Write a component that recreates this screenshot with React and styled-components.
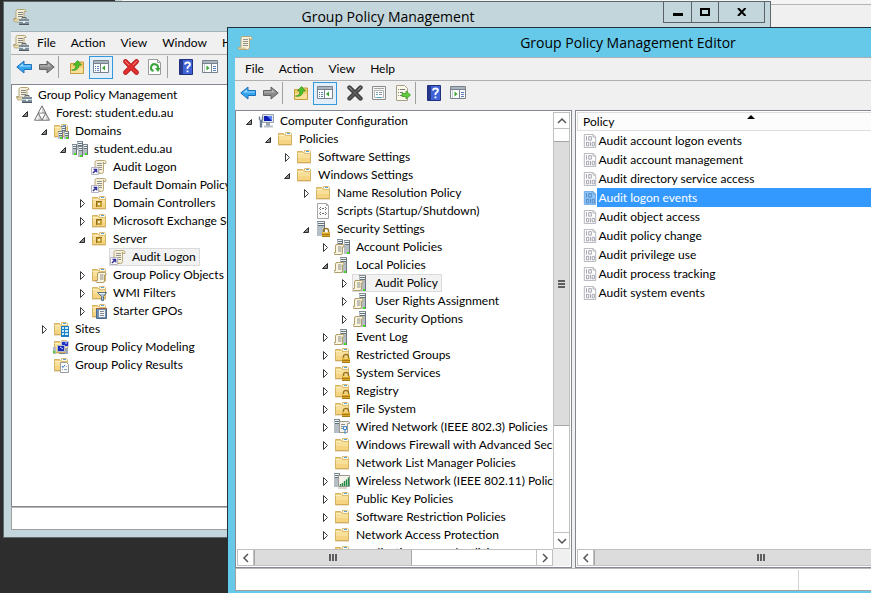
import React from 'react';
import styled, { createGlobalStyle, css } from 'styled-components';

const Global = createGlobalStyle`
  * { box-sizing: border-box; }
  body { margin: 0; }
  button { font: inherit; color: inherit; background: none; border: 0; padding: 0; margin: 0; }
  ul { list-style: none; margin: 0; padding: 0; }
`;

/* ---------- windows ---------- */

const Desktop = styled.div`
  position: relative;
  min-height: 100vh;
  overflow: hidden;
  background: #2d2d2d;
  color: #000;
  font-family: Lato, 'Open Sans', sans-serif;
  font-size: 12px;
  line-height: 18px;
  white-space: nowrap;
`;

const BackWindow = styled.div`
  position: absolute;
  top: 0;
  left: 115px;
  right: 0;
  height: 60px;
  border-left: 7px solid #c3d6db;
  background: #f0f0f0;
`;

const BackBar = styled.div`
  height: 5px;
  background: #f4f4f4;
  border-bottom: 1px solid #b4b4b4;
`;

const Window = styled.section`
  position: absolute;
  display: flex;
  flex-direction: column;
  background: ${(p) => p.$frame};
  border: 1px solid ${(p) => p.$edge};
`;

const ManagementWindow = styled(Window)`
  top: 1px;
  left: 3px;
  right: 100px;
  bottom: 55px;
  padding: 0 7px 7px;
`;

const EditorWindow = styled(Window)`
  top: 27px;
  left: 227px;
  right: -156px;
  bottom: 0;
  padding: 0 7px 2px;
  border-bottom: 0;
`;

const TitleBar = styled.header`
  display: grid;
  grid-template-columns: 1fr auto 1fr;
  align-items: center;
  flex: none;
  height: 29px;
  padding-left: 2px;
`;

const Title = styled.h1`
  margin: 0;
  font-family: 'Open Sans', sans-serif;
  font-size: 14px;
  font-weight: 400;
  line-height: 28px;
`;

const Controls = styled.div`
  display: flex;
  align-self: start;
  justify-self: end;
  border: 1px solid #5a6266;
  border-top: 0;
  margin-right: -2px;
`;

const ControlButton = styled.button`
  display: flex;
  align-items: center;
  justify-content: center;
  width: ${(p) => (p.$wide ? 46 : 27)}px;
  height: 20px;
  & + & { border-left: 1px solid #5a6266; }
`;

const Client = styled.div`
  flex: 1;
  min-height: 0;
  display: flex;
  flex-direction: column;
  background: #f0f0f0;
  border-top: 1px solid #a3b1b6;
`;

const MenuBar = styled.nav`
  display: flex;
  align-items: center;
  height: 23px;
  padding-left: 2px;
  border-bottom: 1px solid #b0b0b0;
`;

const MenuButton = styled.button`
  padding: 0 7px 0 8px;
  height: 20px;
`;

const ToolBar = styled.div`
  display: flex;
  align-items: center;
  height: 29px;
  padding: 0 0 5px 1px;
`;

const ToolButton = styled.button`
  display: flex;
  align-items: center;
  justify-content: center;
  width: ${(p) => (p.$nav ? 23 : 24)}px;
  height: 23px;
  ${(p) => p.$on && css`
    border: 1px solid #3399dd;
    background: #e3eff8;
  `}
`;

const Separator = styled.span`
  width: 1px;
  height: 22px;
  margin-right: 6px;
  background: #a0a0a0;
`;

const Spacer = styled.span`
  width: 6px;
`;

const Panes = styled.div`
  flex: 1;
  min-height: 0;
  display: flex;
  gap: 3px;
`;

const Pane = styled.div`
  flex: ${(p) => (p.$split ? '0 0 43%' : '1')};
  min-width: 0;
  display: grid;
  grid-template-columns: minmax(0, 1fr) auto;
  grid-template-rows: minmax(0, 1fr) auto;
  padding: 1px;
  background: #fff;
  border: 1px solid #828790;
  overflow: hidden;
`;

const StatusBar = styled.footer`
  display: flex;
  flex: none;
  height: 23px;
  background: #fff;
  border: 1px solid #a0a0a0;
  border-top-color: #b8b8b8;
`;

const StatusCell = styled.span`
  flex: 0 0 72%;
  margin-top: 1px;
  border-right: 1px solid #d4d4d4;
`;

/* ---------- tree ---------- */

const Tree = styled.ul`
  overflow: hidden;
`;

const Node = styled.li`
  display: flex;
  align-items: center;
  height: 18px;
  padding-left: ${(p) => (p.$root ? 2 : 6 + p.$level * 19)}px;
`;

const Toggle = styled.button`
  display: flex;
  flex: none;
  width: 12px;
  height: 12px;
  margin-right: 2px;
`;

const NodeLabel = styled.span`
  display: flex;
  align-items: center;
  gap: 6px;
  height: 18px;
  padding-right: 3px;
  border: 1px solid ${(p) => (p.$selected ? '#dadada' : 'transparent')};
  background: ${(p) => (p.$selected ? '#f2f2f2' : 'transparent')};
`;

/* ---------- scroll bars ---------- */

const ScrollBar = styled.div`
  display: flex;
  flex-direction: ${(p) => (p.$vertical ? 'column' : 'row')};
  ${(p) => (p.$vertical ? 'width: 17px;' : 'height: 17px;')}
  background: #fff;
  border: 1px solid #c0c0c0;
`;

const ScrollButton = styled.button`
  display: flex;
  flex: none;
  align-items: center;
  justify-content: center;
  width: ${(p) => (p.$vertical ? 15 : 16)}px;
  height: ${(p) => (p.$vertical ? 16 : 15)}px;
  border: 0 solid #c0c0c0;
  ${(p) => (p.$vertical
    ? css`&:first-child { border-bottom-width: 1px; } &:last-child { border-top-width: 1px; }`
    : css`&:first-child { border-right-width: 1px; } &:last-child { border-left-width: 1px; }`)}
`;

const Track = styled.div`
  flex: 1;
  min-width: 0;
  min-height: 0;
  display: flex;
  flex-direction: ${(p) => (p.$vertical ? 'column' : 'row')};
  padding-top: ${(p) => (p.$vertical ? '12px' : 0)};
`;

const Thumb = styled.div`
  flex: 0 0 ${(p) => p.$size};
  display: flex;
  align-items: center;
  justify-content: center;
  background: #dcdcdc;
  border: 1px solid #a6a6a6;
  ${(p) => (p.$vertical ? 'border-width: 1px 0;' : 'border-width: 0 1px;')}
`;

const Corner = styled.div`
  background: #f0f0f0;
`;

/* ---------- policy list ---------- */

const ListArea = styled.div`
  grid-column: 1 / -1;
  overflow: hidden;
`;

const PolicyTable = styled.table`
  width: 79%;
  border-collapse: collapse;
`;

const HeadCell = styled.th`
  position: relative;
  height: 18px;
  padding: 0 0 0 5px;
  line-height: 17px;
  text-align: left;
  font-weight: 400;
  background: #fcfcfc;
  border: 1px solid #dedede;
  border-width: 1px 0 1px 1px;
`;

const SortMark = styled.svg`
  position: absolute;
  top: 2px;
  left: 50%;
  margin-left: -4px;
`;

const PolicyRow = styled.tr`
  height: 19px;
  color: ${(p) => (p.$selected ? '#fff' : '#000')};
`;

const PolicyCell = styled.td`
  height: 19px;
  padding: 0 0 0 5px;
`;

const PolicyName = styled.span`
  display: flex;
  align-items: center;
  height: 19px;
`;

const PolicyText = styled.span`
  flex: 1;
  line-height: 19px;
  padding-left: 2px;
  background: ${(p) => (p.$selected ? '#3399ff' : 'transparent')};
`;

/* ---------- icon parts ---------- */

const Icon = ({ children, size = 16 }) => (
  <svg width={size} height={size} viewBox="0 0 16 16" fill="none" aria-hidden="true">
    {children}
  </svg>
);

const FolderShape = () => (
  <>
    <path d="M1.500 2.500h5l1 1h7v10h-13z" fill="#f0cd78" stroke="#d6b263" />
    <path d="M8.500 1.500h5l1 1v2h-6z" fill="#fffbe9" stroke="#dcbc70" />
    <path d="M10 2.500h3" stroke="#5a9fdc" />
    <path d="M2 5h12v8h-12z" fill="#f9e09a" />
    <path d="M2 9h12v4h-12z" fill="#f5d482" />
    <path d="M1.500 4.500h6l1-1" stroke="#fdf0c0" />
    <path d="M1 14h14" stroke="#c79f4c" strokeOpacity=".6" />
  </>
);

const SmallScroll = ({ x = 0, y = 0 }) => (
  <g transform={`translate(${x} ${y})`}>
    <path d="M2.500 .5h6q1.500 0 1.500 1.500v1h-1.500v6q0 1.500-1.500 1.500h-6q-1 0-1-1v-1h1.500v-6.500q0-1.500 1.500-1.500z" fill="#f9f4e0" stroke="#b09d68" />
    <path d="M4 3h3.500M4 5h3.500M4 7h3.500" stroke="#8d8d88" />
  </g>
);

const Tower = ({ x = 0, y = 0, h = 13, w = 6, led = true }) => (
  <g transform={`translate(${x} ${y})`}>
    <path d={`M0 0h${w}v${h}h-${w}z`} fill="#b4bec4" />
    <path d={`M${w - 0.5} 0v${h}`} stroke="#6d777d" />
    <path d={`M1 1.500h${w - 2}M1 3.500h${w - 2}`} stroke="#eef3f6" />
    <path d={`M1 2.500h${w - 2}M1 4.500h${w - 2}`} stroke="#66727a" />
    <path d={`M0 .5h${w}`} stroke="#7e888f" />
    {led && <path d={`M${w - 3} ${h - 1}h2`} stroke="#42e01c" strokeWidth="2" />}
  </g>
);

const Lock = ({ x = 8, y = 7 }) => (
  <g transform={`translate(${x} ${y})`}>
    <path d="M1.500 4v-1.500q0-2 2.500-2t2.500 2v1.500" stroke="#97741f" strokeWidth="1.400" />
    <path d="M0 4h8v5h-8z" fill="#d9a52a" />
    <path d="M0 6.500h8M0 8.500h8" stroke="#a97a12" />
    <path d="M1 4.500h5" stroke="#f6d878" />
  </g>
);

const LargeScroll = () => (
  <>
    <path d="M5.500 1.500h8q1.500 0 1.500 2v1h-2.500v8q0 2-2 2h-8q-1.500 0-1.500-2h3v-9q0-2 1.500-2z" fill="#f6f0da" stroke="#b8a87c" />
    <path d="M6 4.500h5M6 6.500h5M6 8.500h5M6 10.500h5" stroke="#94948c" />
    <path d="M1.500 12.500q0 1.500 1.500 1.500h7q-1.500-.5-1.500-1.500z" fill="#dccb96" />
    <path d="M12.500 4.500v-1.500" stroke="#a3946a" />
  </>
);

const icons = {
  console: (
    <>
      <path d="M4.500 .5h7q1.500 0 1.500 2h-2v9h-9q-1.500 0-1.500-2h2.500v-7q0-2 1.500-2z" fill="#f6f0da" stroke="#b3a478" />
      <path d="M5 3.500h5M5 5.500h5M5 7.500h5" stroke="#85857f" />
      <path d="M1 10h6v3h-5q-1 0-1-1.500z" fill="#e6d9ac" stroke="#a3946a" strokeWidth=".6" />
      <path d="M6 10h10v5h-10z" fill="#7c8f9b" />
      <path d="M9 10v-1.500h4v1.500" stroke="#5b6870" />
      <path d="M6 12.500h10" stroke="#cfdbe1" />
      <path d="M6 15.500h10" stroke="#4d5960" />
      <path d="M10 12h2v2h-2z" fill="#eef3f5" />
    </>
  ),
  scroll: <LargeScroll />,
  link: (
    <>
      <LargeScroll />
      <path d="M.5 8.500h7v7h-7z" fill="#fff" stroke="#b4b4c0" />
      <path d="M2 14l2.500-2.500" stroke="#35309a" strokeWidth="1.600" />
      <path d="M2.500 10h3.500v3.500z" fill="#35309a" stroke="#35309a" strokeWidth=".6" />
    </>
  ),
  forest: (
    <>
      <path d="M8 .8l3.800 7.200h-7.600zM4.300 8l3.700 7.200h-7.500zM11.700 8l3.800 7.200h-7.500z" fill="#d4d4d4" stroke="#747474" />
      <path d="M8 2.500v5h-2.800zM4.300 10v4.500h-2.500zM11.700 10v4.500h-2.500z" fill="#fff" />
    </>
  ),
  domains: (
    <>
      <FolderShape />
      <Tower x={8} y={3} h={7} w={5} led={false} />
      <Tower x={5} y={8} h={8} w={5} />
      <Tower x={11} y={8} h={8} w={5} />
    </>
  ),
  domain: (
    <>
      <Tower x={5} y={0} h={9} w={6} led={false} />
      <Tower x={0} y={3} h={11} w={5} />
      <Tower x={6} y={5} h={11} w={5} />
      <Tower x={11} y={3} h={11} w={5} />
    </>
  ),
  ou: (
    <>
      <FolderShape />
      <path d="M5 6h6v6h-6z" fill="#c79e36" />
      <path d="M5 6.500h6M5.500 7v5" stroke="#8f6d1c" />
      <path d="M7 8h2v2h-2z" fill="#fff6cf" />
    </>
  ),
  gpos: (<><FolderShape /><SmallScroll x={5} y={5} /></>),
  wmi: (
    <>
      <FolderShape />
      <path d="M6.500 7.500h9l-3 4v4h-2v-4z" fill="#a8bfd0" stroke="#5d7487" />
      <path d="M8 8.500h6" stroke="#e6f0f7" />
    </>
  ),
  starter: (
    <>
      <FolderShape />
      <path d="M5.500 5.500h10v10h-10z" fill="#6f8fb4" stroke="#4d6988" />
      <path d="M8 7h6v7h-6z" fill="#f5f5f2" />
      <path d="M9 8.500h4M9 10.500h4M9 12.500h4" stroke="#7f8a96" />
      <path d="M5 5.500h11" stroke="#a4653c" />
    </>
  ),
  sites: (
    <>
      <FolderShape />
      <path d="M8 5h8v11h-8z" fill="#1f7fc4" />
      <path d="M9 7h2M12 7h3M9 10h2M12 10h3M9 13h2M12 13h3" stroke="#c8ebff" strokeWidth="2" />
    </>
  ),
  modeling: (
    <>
      <FolderShape />
      <path d="M8 2h8v6h-8z" fill="#c6ccd6" />
      <path d="M9 3h6v4h-6z" fill="#2530c8" />
      <path d="M4 6h8v7h-8z" fill="#b4bcc6" />
      <path d="M5 7h6v5h-6z" fill="#1c28b8" />
      <path d="M7 8l3 2M12 4h2" stroke="#cfe0ff" />
      <path d="M12 9h3v6h-3z" fill="#9ea8b0" />
      <path d="M6 14.500h6" stroke="#7c858c" />
      <path d="M0 8h3v7h-3z" fill="#b4bcc2" />
      <path d="M0 13h2" stroke="#42d820" strokeWidth="2" />
    </>
  ),
  results: (
    <>
      <FolderShape />
      <path d="M7.500 5.500h6l2 2v8h-8z" fill="#fbfbfb" stroke="#9d9d9d" />
      <path d="M9 9l1 1.500 2-2.500" stroke="#3b7cc0" />
      <path d="M9 12.500h1M11 12.500h3M13 9.500h1" stroke="#7fa3c8" />
    </>
  ),
  computer: (
    <>
      <path d="M4.500 1.500h11v8h-11z" fill="#dfe5ea" stroke="#98a2ab" />
      <path d="M6 3h8v5h-8z" fill="#101cb4" />
      <path d="M9 3h5v5z" fill="#5f86f0" />
      <path d="M8 10h4v3h-4z" fill="#9ba5ad" />
      <path d="M6 13.500h9" stroke="#b9c1c8" strokeWidth="2" />
      <path d="M1.500 3.500v3l1 1v7M4.500 3.500v3l-1 1v7" stroke="#6d7f95" strokeWidth="1.400" />
    </>
  ),
  folder: <FolderShape />,
  scripts: (
    <>
      <path d="M2.500 .5h9l2 2v13h-11z" fill="#fcfcfc" stroke="#a5a5a5" />
      <path d="M6 4l-1.500 1.500 1.500 1.500M10 4l1.500 1.500-1.500 1.500M7 5.500h2M6 9l-1.500 1.500 1.500 1.500M10 9l1.500 1.500-1.500 1.500M7 10.500h2" stroke="#686868" />
      <path d="M11.500 .5v2h2" stroke="#a5a5a5" />
    </>
  ),
  security: (<><Tower x={2} y={0} h={15} w={8} led={false} /><Lock x={7} y={7} /></>),
  account: (
    <>
      <Tower x={3} y={0} h={14} w={6} led={false} />
      <Tower x={10} y={1} h={14} w={6} />
      <SmallScroll x={0} y={5} />
    </>
  ),
  local: (<><Tower x={6} y={0} h={16} w={7} /><SmallScroll x={0} y={5} /></>),
  locked: (<><FolderShape /><Lock x={8} y={7} /></>),
  wired: (
    <>
      <Tower x={0} y={0} h={14} w={6} led={false} />
      <path d="M5.500 2.500h9q1 0 1 2h-2v9h-8z" fill="#f5f3ea" stroke="#9a9a92" />
      <path d="M7 5.500h4M7 7.500h2M7 9.500h2" stroke="#8c8c88" />
      <path d="M9.500 7.500h3v3h-3zM11 11v4" stroke="#3f87cf" />
    </>
  ),
  wireless: (
    <>
      <Tower x={0} y={0} h={14} w={6} led={false} />
      <path d="M4.500 2.500h11v11h-11z" fill="#f5f3ea" stroke="#9a9a92" />
      <path d="M6.500 11v2M8.500 10v3M10.500 8v5M12.500 6.500v6.500M14.500 4.500v8.500" stroke="#1c8a44" strokeWidth="1.400" />
      <path d="M4 15h9" stroke="#b9b39a" />
    </>
  ),
  back: (
    <>
      <path d="M8 2v3.500h7.500v5H8V14L.8 8z" fill="#35a5ee" stroke="#1a6fb8" />
      <path d="M7 4.500v2h8v1H3z" fill="#9edbff" />
    </>
  ),
  forward: (
    <>
      <path d="M8 2v3.500H.5v5H8V14l7.200-6z" fill="#8b8b8b" stroke="#626262" />
      <path d="M9 4.500v2H1v1h11z" fill="#bdbdbd" />
    </>
  ),
  up: (
    <>
      <path d="M1.500 4.500h6l1-1.500h6v11.500h-13z" fill="#eecb6b" stroke="#c79d3c" />
      <path d="M2 8.500h12v5.500h-12z" fill="#f9e09a" />
      <path d="M2.500 11c3 0 4.500-2 4.500-5h-2.500l4-4.500 4 4.500h-2.500c0 4-3 6-7.500 5z" fill="#4fc02c" stroke="#2f8f18" strokeWidth=".7" />
    </>
  ),
  paneLeft: (
    <>
      <path d="M.5 1.500h15v12h-15z" fill="#fbfcfd" stroke="#78828c" />
      <path d="M1 3h11" stroke="#aab4be" strokeWidth="2" />
      <path d="M12 3h3" stroke="#66727c" />
      <path d="M1 4.500h14M7.500 5v8" stroke="#78828c" />
      <path d="M2 7.500h1M4 7.500h2M2 9.500h1M4 9.500h2M2 11.500h1M4 11.500h2" stroke="#5b82b8" />
      <path d="M12 6.500v5l-3-2.500z" fill="#36a52a" />
    </>
  ),
  paneRight: (
    <>
      <path d="M.5 1.500h15v12h-15z" fill="#fbfcfd" stroke="#78828c" />
      <path d="M1 3h11" stroke="#aab4be" strokeWidth="2" />
      <path d="M12 3h3" stroke="#66727c" />
      <path d="M1 4.500h14M9.500 5v8" stroke="#78828c" />
      <path d="M11 7.500h3M11 9.500h3M11 11.500h3" stroke="#5b82b8" />
      <path d="M4.500 6.500v5l3-2.500z" fill="#36a52a" />
      <path d="M2.500 5v8" stroke="#c5ccd2" />
    </>
  ),
  deleteRed: (
    <>
      <path d="M2.500 2.500l11 11M13.500 2.500l-11 11" stroke="#b81c1c" strokeWidth="4.600" strokeLinecap="round" />
      <path d="M2.500 2.500l11 11M13.500 2.500l-11 11" stroke="#e23030" strokeWidth="3" strokeLinecap="round" />
      <path d="M2 2l4 4M14 2l-4 4" stroke="#ff8a80" />
    </>
  ),
  deleteGray: (
    <>
      <path d="M2.500 2.500l11 11M13.500 2.500l-11 11" stroke="#3a3a3a" strokeWidth="4.400" strokeLinecap="round" />
      <path d="M2.500 2.500l11 11M13.500 2.500l-11 11" stroke="#5a5a5a" strokeWidth="2.400" strokeLinecap="round" />
      <path d="M2 2l3 3M14 2l-3 3" stroke="#909090" />
    </>
  ),
  refresh: (
    <>
      <path d="M1.500 .5h9l3 3v12h-12z" fill="#fff" stroke="#9a9a9a" />
      <path d="M10.500 .5v3h3" stroke="#9a9a9a" />
      <path d="M6.500 12a3.500 3.500 0 1 1 4.500-3" stroke="#3aa63c" strokeWidth="2" />
      <path d="M8 9h5.500l-2.500 4z" fill="#3aa63c" />
    </>
  ),
  properties: (
    <>
      <path d="M1.500 1.500h13v13h-13z" fill="#f5f5f5" stroke="#8c8c8c" />
      <path d="M3 3.500h10" stroke="#a6a6a6" />
      <path d="M3.500 5.500h9v7h-9z" fill="#fff" stroke="#b4b4b4" />
      <path d="M5 7.500h2M8 7.500h3M8 9.500h3" stroke="#8b9aa5" />
      <path d="M5 9.500h2M6 12.500h4" stroke="#45a8cf" />
    </>
  ),
  export: (
    <>
      <path d="M1.500 .5h8l3 3v12h-11z" fill="#fdf9e8" stroke="#a5a08c" />
      <path d="M3 4.500h1M5 4.500h5M3 7.500h1M5 7.500h3M3 10.500h1M5 10.500h3" stroke="#7d7d7d" />
      <path d="M7 8.500h4v-2.500l4.500 4-4.500 4v-2.500h-4z" fill="#62cc3c" stroke="#3a9c1f" strokeWidth=".8" />
    </>
  ),
  help: (
    <>
      <path d="M1.500 .5h13v15h-13z" fill="#3f63d6" stroke="#20307c" />
      <path d="M2 1h3v14h-3z" fill="#27398f" />
      <path d="M7 5.500q0-2 2.500-2t2.500 2q0 1-1.500 2t-1 2.500M9.500 11.500v1.800" stroke="#fff" strokeWidth="1.800" />
    </>
  ),
  audit: (
    <>
      <path d="M1.500 .5h10l3 3v12h-13z" fill="#fdfdfd" stroke="#adadb6" />
      <path d="M11.500 .5v3h3" stroke="#adadb6" />
      <path d="M4 2.500v5M6.500 3h3v4h-3zM4 9.500h2.500v4h-2.500zM8.500 9v5M10.500 9.500h2.500v4h-2.500z" stroke="#9a9aa8" />
    </>
  ),
  auditSelected: (
    <>
      <path d="M1.500 .5h10l3 3v12h-13z" fill="#8cc4f8" stroke="#6aa2dc" />
      <path d="M11.500 .5v3h3" stroke="#6aa2dc" />
      <path d="M4 2.500v5M6.500 3h3v4h-3zM4 9.500h2.500v4h-2.500zM8.500 9v5M10.500 9.500h2.500v4h-2.500z" stroke="#4f84bf" />
    </>
  ),
};

const ToggleMark = ({ open }) => (
  <svg width="12" height="12" viewBox="0 0 12 12" aria-hidden="true">
    {open
      ? <path d="M8.500 4.500v5h-5z" fill="#8a8a8a" stroke="#2b2b2b" />
      : <path d="M4.500 2.500v8l4-4z" fill="#fff" stroke="#3c3c3c" />}
  </svg>
);

const chevrons = {
  up: 'M1 7l4-4 4 4',
  down: 'M1 3l4 4 4-4',
  left: 'M7 1l-4 4 4 4',
  right: 'M3 1l4 4-4 4',
};

const Chevron = ({ dir }) => (
  <svg width="10" height="10" viewBox="0 0 10 10" aria-hidden="true">
    <path d={chevrons[dir]} fill="none" stroke="#555" strokeWidth="1.500" />
  </svg>
);

const Grip = ({ vertical }) => (
  <svg width="8" height="8" viewBox="0 0 8 8" aria-hidden="true">
    <path d={vertical ? 'M0 1h7M0 4h7M0 7h7' : 'M1 0v7M4 0v7M7 0v7'} stroke="#5e5e5e" strokeWidth="2" />
  </svg>
);

/* ---------- composed parts ---------- */

function TreeView({ label, nodes }) {
  return (
    <Tree role="tree" aria-label={label}>
      {nodes.map(([level, icon, text, state, selected], i) => (
        <Node key={i} role="treeitem" $level={level} $root={state === 'root'} aria-level={level + 1} aria-selected={!!selected}>
          {state !== 'root' && (state
            ? <Toggle aria-label={`${state === 'open' ? 'Collapse' : 'Expand'} ${text}`}><ToggleMark open={state === 'open'} /></Toggle>
            : <Toggle as="span" />)}
          <NodeLabel $selected={selected}>
            <Icon>{icons[icon]}</Icon>
            {text}
          </NodeLabel>
        </Node>
      ))}
    </Tree>
  );
}

function Scroller({ vertical, size }) {
  return (
    <ScrollBar $vertical={vertical}>
      <ScrollButton $vertical={vertical} aria-label={vertical ? 'Scroll up' : 'Scroll left'}>
        <Chevron dir={vertical ? 'up' : 'left'} />
      </ScrollButton>
      <Track $vertical={vertical}>
        <Thumb $vertical={vertical} $size={size}><Grip vertical={vertical} /></Thumb>
      </Track>
      <ScrollButton $vertical={vertical} aria-label={vertical ? 'Scroll down' : 'Scroll right'}>
        <Chevron dir={vertical ? 'down' : 'right'} />
      </ScrollButton>
    </ScrollBar>
  );
}

function Tools({ items }) {
  return (
    <ToolBar role="toolbar">
      {items.map((item, i) => {
        if (item === '|') return <Separator key={i} />;
        if (item === ' ') return <Spacer key={i} />;
        const [icon, name] = item;
        return (
          <ToolButton key={i} aria-label={name} $nav={icon === 'back' || icon === 'forward'} $on={icon === 'paneLeft'}>
            <Icon>{icons[icon]}</Icon>
          </ToolButton>
        );
      })}
    </ToolBar>
  );
}

const leading = [['back', 'Back'], ['forward', 'Forward'], '|', ['up', 'Up one level'], ['paneLeft', 'Show or hide console tree'], ' '];
const trailing = ['|', ['help', 'Help'], ['paneRight', 'Show or hide action pane']];

const managementTools = [...leading, ['deleteRed', 'Delete'], ['refresh', 'Refresh'], ...trailing];
const editorTools = [...leading, ['deleteGray', 'Delete'], ['properties', 'Properties'], ['export', 'Export list'], ...trailing];

const managementNodes = [
  [0, 'console', 'Group Policy Management', 'root'],
  [0, 'forest', 'Forest: student.edu.au', 'open'],
  [1, 'domains', 'Domains', 'open'],
  [2, 'domain', 'student.edu.au', 'open'],
  [3, 'link', 'Audit Logon'],
  [3, 'link', 'Default Domain Policy'],
  [3, 'ou', 'Domain Controllers', 'closed'],
  [3, 'ou', 'Microsoft Exchange Security Groups', 'closed'],
  [3, 'ou', 'Server', 'open'],
  [4, 'link', 'Audit Logon', null, true],
  [3, 'gpos', 'Group Policy Objects', 'closed'],
  [3, 'wmi', 'WMI Filters', 'closed'],
  [3, 'starter', 'Starter GPOs', 'closed'],
  [1, 'sites', 'Sites', 'closed'],
  [1, 'modeling', 'Group Policy Modeling'],
  [1, 'results', 'Group Policy Results'],
];

const editorNodes = [
  [0, 'computer', 'Computer Configuration', 'open'],
  [1, 'folder', 'Policies', 'open'],
  [2, 'folder', 'Software Settings', 'closed'],
  [2, 'folder', 'Windows Settings', 'open'],
  [3, 'folder', 'Name Resolution Policy', 'closed'],
  [3, 'scripts', 'Scripts (Startup/Shutdown)'],
  [3, 'security', 'Security Settings', 'open'],
  [4, 'account', 'Account Policies', 'closed'],
  [4, 'local', 'Local Policies', 'open'],
  [5, 'local', 'Audit Policy', 'closed', true],
  [5, 'local', 'User Rights Assignment', 'closed'],
  [5, 'local', 'Security Options', 'closed'],
  [4, 'local', 'Event Log', 'closed'],
  [4, 'locked', 'Restricted Groups', 'closed'],
  [4, 'locked', 'System Services', 'closed'],
  [4, 'locked', 'Registry', 'closed'],
  [4, 'locked', 'File System', 'closed'],
  [4, 'wired', 'Wired Network (IEEE 802.3) Policies', 'closed'],
  [4, 'folder', 'Windows Firewall with Advanced Security', 'closed'],
  [4, 'folder', 'Network List Manager Policies'],
  [4, 'wireless', 'Wireless Network (IEEE 802.11) Policies', 'closed'],
  [4, 'folder', 'Public Key Policies', 'closed'],
  [4, 'folder', 'Software Restriction Policies', 'closed'],
  [4, 'folder', 'Network Access Protection', 'closed'],
  [4, 'folder', 'Application Control Policies', 'closed'],
];

const policies = [
  'Audit account logon events',
  'Audit account management',
  'Audit directory service access',
  'Audit logon events',
  'Audit object access',
  'Audit policy change',
  'Audit privilege use',
  'Audit process tracking',
  'Audit system events',
];

export default function App() {
  return (
    <Desktop>
      <Global />
      <BackWindow><BackBar /></BackWindow>

      <ManagementWindow $frame="#c3d6db" $edge="#5f686c">
        <TitleBar>
          <Icon>{icons.console}</Icon>
          <Title>Group Policy Management</Title>
          <Controls>
            <ControlButton aria-label="Minimize">
              <svg width="10" height="10" viewBox="0 0 10 10"><path d="M0 7.500h10" stroke="#000" strokeWidth="3" /></svg>
            </ControlButton>
            <ControlButton aria-label="Maximize">
              <svg width="10" height="8" viewBox="0 0 10 8"><path d="M1 1h8v6h-8z" fill="none" stroke="#000" strokeWidth="2" /></svg>
            </ControlButton>
            <ControlButton $wide aria-label="Close">
              <svg width="10" height="8" viewBox="0 0 10 8"><path d="M1 0l7.500 8M8.500 0l-7.500 8" stroke="#000" strokeWidth="2" /></svg>
            </ControlButton>
          </Controls>
        </TitleBar>
        <Client>
          <MenuBar>
            <Icon>{icons.console}</Icon>
            {['File', 'Action', 'View', 'Window', 'Help'].map((m) => <MenuButton key={m}>{m}</MenuButton>)}
          </MenuBar>
          <Tools items={managementTools} />
          <Panes>
            <Pane><TreeView label="Console tree" nodes={managementNodes} /></Pane>
          </Panes>
          <StatusBar />
        </Client>
      </ManagementWindow>

      <EditorWindow $frame="#66c9ea" $edge="#23313a">
        <TitleBar>
          <Icon>{icons.scroll}</Icon>
          <Title>Group Policy Management Editor</Title>
        </TitleBar>
        <Client>
          <MenuBar>
            {['File', 'Action', 'View', 'Help'].map((m) => <MenuButton key={m}>{m}</MenuButton>)}
          </MenuBar>
          <Tools items={editorTools} />
          <Panes>
            <Pane $split>
              <TreeView label="Policy tree" nodes={editorNodes} />
              <Scroller vertical size="73%" />
              <Scroller size="56%" />
              <Corner />
            </Pane>
            <Pane>
              <ListArea>
                <PolicyTable>
                  <thead>
                    <tr>
                      <HeadCell scope="col">
                        Policy
                        <SortMark width="8" height="4" viewBox="0 0 8 4" aria-hidden="true"><path d="M0 4l4-4 4 4z" /></SortMark>
                      </HeadCell>
                    </tr>
                  </thead>
                  <tbody>
                    {policies.map((name, i) => (
                      <PolicyRow key={name} $selected={i === 3}>
                        <PolicyCell>
                          <PolicyName>
                            <Icon size={14}>{i === 3 ? icons.auditSelected : icons.audit}</Icon>
                            <PolicyText $selected={i === 3}>{name}</PolicyText>
                          </PolicyName>
                        </PolicyCell>
                      </PolicyRow>
                    ))}
                  </tbody>
                </PolicyTable>
              </ListArea>
              <Scroller size="82%" />
            </Pane>
          </Panes>
          <StatusBar><StatusCell /></StatusBar>
        </Client>
      </EditorWindow>
    </Desktop>
  );
}
